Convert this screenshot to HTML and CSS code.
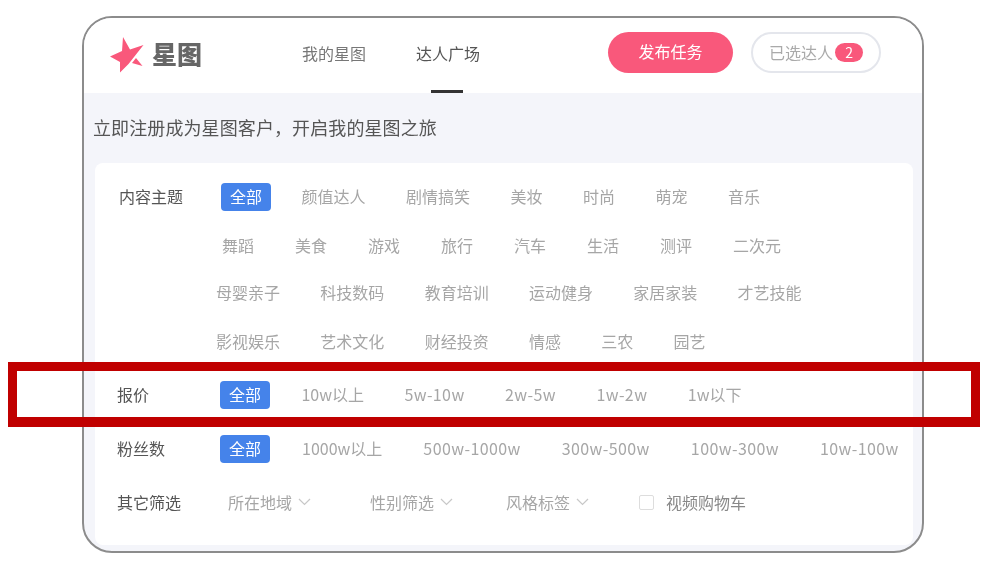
FILE: index.html
```html
<!DOCTYPE html>
<html lang="zh-CN">
<head>
<meta charset="utf-8">
<title>星图</title>
<link rel="stylesheet" href="styles.css">
</head>
<body>
<div class="frame">
  <header class="top">
    <div class="logo">
      <svg class="star" viewBox="0 0 36 38" width="36" height="38" aria-hidden="true">
        <path d="M13 0 L20 12.5 L33.5 8 L18.5 27 L10 35.5 L10 25 L0 19.5 L12 14 Z" fill="#f9587b"/>
        <path d="M26 21 L32.5 29 L22 26 Z" fill="#f9587b"/>
      </svg>
      <span class="logo-text">星图</span>
    </div>
    <nav class="nav">
      <a class="nav-item">我的星图</a>
      <a class="nav-item nav-active">达人广场</a>
    </nav>
    <button class="publish">发布任务</button>
    <div class="chosen"><span>已选达人</span><span class="badge">2</span></div>
  </header>
  <main class="main">
    <h1 class="title">立即注册成为星图客户，开启我的星图之旅</h1>
    <section class="card">
      <div class="row">
        <div class="label label-topic">内容主题</div>
        <div class="opts">
          <span class="pill pill-topic">全部</span><span>颜值达人</span><span>剧情搞笑</span><span>美妆</span><span>时尚</span><span>萌宠</span><span>音乐</span>
        </div>
      </div>
      <div class="row line-2">
        <div class="opts opts-2">
          <span>舞蹈</span><span>美食</span><span>游戏</span><span>旅行</span><span>汽车</span><span>生活</span><span>测评</span><span>二次元</span>
        </div>
      </div>
      <div class="row line-3">
        <div class="opts opts-3">
          <span>母婴亲子</span><span>科技数码</span><span>教育培训</span><span>运动健身</span><span>家居家装</span><span>才艺技能</span>
        </div>
      </div>
      <div class="row line-4">
        <div class="opts opts-3">
          <span>影视娱乐</span><span>艺术文化</span><span>财经投资</span><span>情感</span><span>三农</span><span>园艺</span>
        </div>
      </div>
      <div class="row line-5">
        <div class="label">报价</div>
        <div class="opts opts-price">
          <span class="pill">全部</span><span>10w以上</span><span class="range">5w-10w</span><span class="range">2w-5w</span><span class="range">1w-2w</span><span>1w以下</span>
        </div>
      </div>
      <div class="row line-6">
        <div class="label">粉丝数</div>
        <div class="opts opts-num">
          <span class="pill">全部</span><span>1000w以上</span><span class="range">500w-1000w</span><span class="range">300w-500w</span><span class="range">100w-300w</span><span class="range">10w-100w</span>
        </div>
      </div>
      <div class="row line-6">
        <div class="label">其它筛选</div>
        <div class="selects">
          <span class="select select-first">所在地域<svg class="chev" viewBox="0 0 13 8" width="13" height="8" aria-hidden="true"><path d="M1 1 L6.5 6.5 L12 1" fill="none" stroke="#c8c8c8" stroke-width="1.2"/></svg></span>
          <span class="select">性别筛选<svg class="chev" viewBox="0 0 13 8" width="13" height="8" aria-hidden="true"><path d="M1 1 L6.5 6.5 L12 1" fill="none" stroke="#c8c8c8" stroke-width="1.2"/></svg></span>
          <span class="select">风格标签<svg class="chev" viewBox="0 0 13 8" width="13" height="8" aria-hidden="true"><path d="M1 1 L6.5 6.5 L12 1" fill="none" stroke="#c8c8c8" stroke-width="1.2"/></svg></span>
          <label class="check"><span class="box"></span><span class="check-text">视频购物车</span></label>
        </div>
      </div>
    </section>
  </main>
</div>
<div class="highlight"></div>
</body>
</html>
```

FILE: styles.css
```css
html, body {
  margin: 0;
  padding: 0;
  background: #fff;
}
body {
  width: 1000px;
  height: 571px;
  overflow: hidden;
  position: relative;
  font-family: "Noto Sans CJK SC", "Noto Sans", sans-serif;
  font-size: 16px;
  padding-top: 16px;
  box-sizing: border-box;
}
.frame {
  width: 842px;
  height: 537px;
  margin-left: 82px;
  box-sizing: border-box;
  border: 2px solid #8c8c8c;
  border-radius: 30px;
  overflow: hidden;
  background: #f4f5fa;
  display: flex;
  flex-direction: column;
  filter: blur(0.4px);
}
.top {
  height: 75px;
  flex: none;
  background: #fff;
  display: flex;
  align-items: center;
  padding-left: 26px;
}
.logo {
  display: flex;
  align-items: center;
  gap: 6px;
  width: 192px;
  margin-top: 0;
}
.star {
  flex: none;
}
.logo-text {
  font-size: 25px;
  font-weight: 900;
  line-height: 30px;
  color: #666;
  margin-top: -6px;
}
.nav {
  display: flex;
  gap: 50px;
  height: 75px;
  width: 306px;
  align-items: center;
}
.nav-item {
  color: #777;
  line-height: 24px;
  margin-top: -5px;
  position: relative;
}
.nav-active {
  color: #555;
}
.nav-active::after {
  content: "";
  position: absolute;
  left: 15px;
  width: 32px;
  height: 3px;
  top: 49px;
  background: #333;
}
.publish {
  width: 125px;
  height: 41px;
  margin-top: -7px;
  border: 0;
  padding: 0 0 2px;
  border-radius: 21px;
  background: #f9587b;
  color: #fff;
  font: inherit;
}
.chosen {
  width: 130px;
  height: 41px;
  margin-top: -7px;
  margin-left: 18px;
  box-sizing: border-box;
  border: 2px solid #e4e6ec;
  border-radius: 21px;
  padding-left: 16px;
  display: flex;
  align-items: center;
  gap: 2px;
  color: #aaa;
}
.badge {
  width: 28px;
  height: 19px;
  border-radius: 10px;
  background: #f9587b;
  color: #fff;
  font-size: 14px;
  line-height: 19px;
  text-align: center;
}
.main {
  flex: 1;
  padding-left: 10px;
  padding-right: 9px;
}
.title {
  margin: 0 0 0 -1px;
  height: 70px;
  font-size: 18px;
  font-weight: 400;
  line-height: 68px;
  letter-spacing: 0.1px;
  color: #555;
}
.card {
  height: 382px;
  margin-left: 1px;
  border-radius: 8px;
  background: #fff;
  padding-top: 20px;
  box-sizing: border-box;
}
.row {
  display: flex;
  align-items: center;
  height: 28px;
  color: #a6a6a6;
  white-space: nowrap;
}
.line-2 { margin-top: 21px; }
.line-3 { margin-top: 19px; }
.line-4 { margin-top: 21px; }
.line-5 { margin-top: 25px; }
.line-6 { margin-top: 26px; }
.label {
  width: 125px;
  flex: none;
  padding-left: 22px;
  padding-bottom: 2px;
  box-sizing: border-box;
  color: #555;
}
.label-topic {
  padding-left: 24px;
  width: 126px;
}
.opts {
  display: flex;
  align-items: center;
  gap: 40.5px;
}
.opts > span {
  padding-bottom: 2px;
}
.opts-price {
  gap: 40.4px;
}
.opts-num {
  gap: 41px;
}
.opts-2 {
  margin-left: 127px;
  gap: 41px;
}
.opts-3 {
  margin-left: 121px;
  gap: 40.3px;
}
.range {
  letter-spacing: 0.4px;
}
.opts > .pill {
  width: 50px;
  height: 28px;
  margin-right: -9px;
  padding: 0;
  box-sizing: border-box;
  border-radius: 4px;
  background: #4583ea;
  color: #fff;
  text-align: center;
  line-height: 26px;
}
.opts > .pill-topic {
  margin-right: -10px;
}
.selects {
  display: flex;
  align-items: center;
  margin-left: 8px;
  gap: 53px;
  padding-bottom: 2px;
}
.select {
  display: flex;
  align-items: center;
  gap: 6px;
}
.select-first {
  margin-right: 6px;
}
.check {
  display: flex;
  align-items: center;
  gap: 12px;
  color: #888;
  margin-left: -3px;
}
.box {
  width: 15px;
  height: 15px;
  box-sizing: border-box;
  border: 1px solid #ddd;
  border-radius: 2px;
  background: #fff;
}
.highlight {
  position: absolute;
  left: 8px;
  top: 362px;
  width: 972px;
  height: 65px;
  box-sizing: border-box;
  border: solid #c00000;
  border-width: 9px 9px 10px;
}
```
